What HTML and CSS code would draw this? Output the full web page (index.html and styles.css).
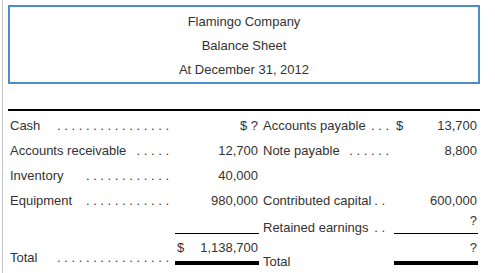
FILE: index.html
```html
<!DOCTYPE html>
<html>
<head>
<meta charset="utf-8">
<link rel="stylesheet" href="styles.css">
</head>
<body>
<div class="page">
  <div class="header">
    <div class="title">Flamingo Company</div>
    <div class="title">Balance Sheet</div>
    <div class="title">At December 31, 2012</div>
  </div>
  <div class="rule"></div>
  <div class="sheet">
    <div class="lbl"><span>Cash</span><span class="dots">. . . . . . . . . . . . . . . .</span></div>
    <div class="amt">$ ?</div>
    <div class="rlbl"><span>Accounts payable</span><span class="dots">. . .</span></div>
    <div class="amt split"><span>$</span><span>13,700</span></div>

    <div class="lbl"><span>Accounts receivable</span><span class="dots">. . . . .</span></div>
    <div class="amt">12,700</div>
    <div class="rlbl"><span>Note payable</span><span class="dots">. . . . . .</span></div>
    <div class="amt">8,800</div>

    <div class="lbl"><span>Inventory</span><span class="dots">. . . . . . . . . . . .</span></div>
    <div class="amt">40,000</div>
    <div class="rlbl"></div>
    <div class="amt"></div>

    <div class="lbl"><span>Equipment</span><span class="dots">. . . . . . . . . . . .</span></div>
    <div class="amt">980,000</div>
    <div class="rlbl"><span>Contributed capital</span><span class="dots short">. .</span></div>
    <div class="amt">600,000</div>

    <div class="lbl"></div>
    <div class="sub"></div>
    <div class="rlbl low"><span>Retained earnings</span><span class="dots short">. .</span></div>
    <div class="sub">?</div>

    <div class="lbl total"><span>Total</span><span class="dots">. . . . . . . . . . . . . . . .</span></div>
    <div class="grand split"><span>$</span><span>1,138,700</span></div>
    <div class="rlbl rtotal"><span>Total</span></div>
    <div class="grand">?</div>
  </div>
</div>
</body>
</html>
```
FILE: styles.css
```css
html, body {
  margin: 0;
  padding: 0;
  background: #fff;
}
body {
  font-family: "Liberation Sans", Arial, Helvetica, sans-serif;
  font-size: 13px;
  color: #333;
}
.page {
  margin-left: 2px;
  border-left: 1px solid #c4c4c4;
  padding: 5px 0 0 5px;
  min-height: 100vh;
  box-sizing: border-box;
}
.header {
  width: 472px;
  box-sizing: border-box;
  border: 2px solid #4d8dcb;
  padding-top: 3px;
  text-align: center;
}
.title {
  line-height: 24px;
}
.rule {
  width: 472px;
  height: 2px;
  background: #000;
  margin-top: 25px;
}
.sheet {
  margin-top: 2px;
  width: 470px;
  display: grid;
  grid-template-columns: 167px 84px 135px 84px;
  grid-template-rows: 25px 25px 25px 25px 21px 36px;
}
.lbl, .rlbl {
  display: flex;
  justify-content: space-between;
  line-height: 25px;
  white-space: nowrap;
}
.lbl {
  padding: 0 6px 0 2px;
}
.rlbl {
  padding: 0 5px 0 4px;
}
.dots.short {
  padding-right: 4px;
}
.amt {
  line-height: 25px;
  text-align: right;
  padding-right: 1px;
}
.split {
  display: flex;
  justify-content: space-between;
  padding-left: 2px;
}
.sub {
  box-sizing: border-box;
  height: 21px;
  border-bottom: 1px solid #000;
  line-height: 16px;
  text-align: right;
  padding-right: 1px;
}
.rlbl.low {
  padding-top: 8px;
  line-height: 13px;
}
.grand {
  align-self: start;
  box-sizing: border-box;
  height: 31px;
  border-bottom: 4px solid #000;
  padding-top: 6px;
  line-height: 16px;
  text-align: right;
  padding-right: 1px;
}
.lbl.total {
  padding-top: 16px;
  line-height: 16px;
}
.rlbl.rtotal {
  padding-top: 20px;
  line-height: 16px;
}
```
